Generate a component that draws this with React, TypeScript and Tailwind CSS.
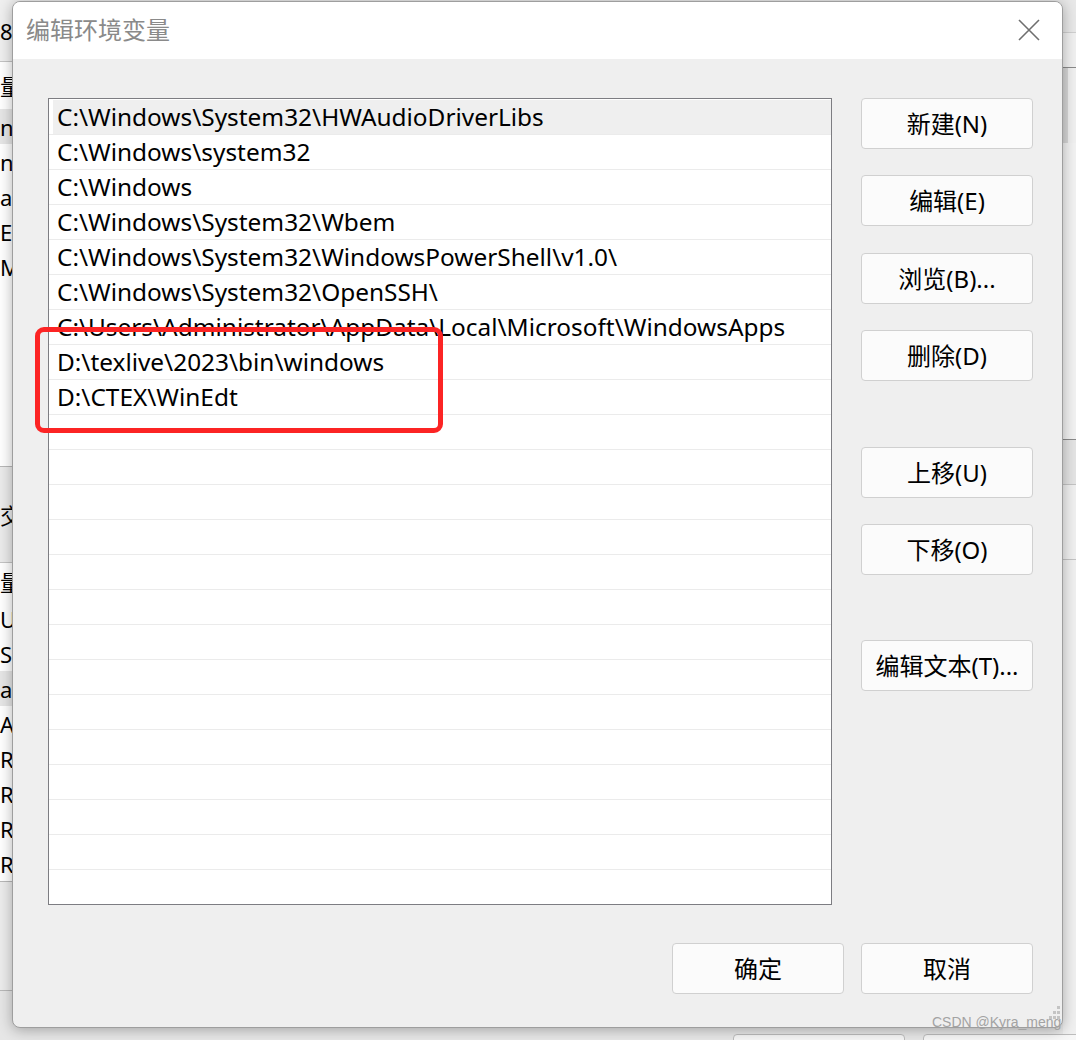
import React from 'react';

const paths = [
  'C:\\Windows\\System32\\HWAudioDriverLibs',
  'C:\\Windows\\system32',
  'C:\\Windows',
  'C:\\Windows\\System32\\Wbem',
  'C:\\Windows\\System32\\WindowsPowerShell\\v1.0\\',
  'C:\\Windows\\System32\\OpenSSH\\',
  'C:\\Users\\Administrator\\AppData\\Local\\Microsoft\\WindowsApps',
  'D:\\texlive\\2023\\bin\\windows',
  'D:\\CTEX\\WinEdt',
];

const rows = [...paths, ...Array(14).fill('')];

const FONT = "font-['Noto_Sans','Noto_Sans_CJK_SC',sans-serif]";

function Btn({ label, className = '' }: { label: string; className?: string }) {
  return (
    <div
      className={`w-[172px] h-[51px] flex items-center justify-center rounded-[4px] border border-[#d0d0d0] bg-[#fbfbfb] text-[24px] text-black ${className}`}
    >
      {label}
    </div>
  );
}

// bits of the window behind the dialog, left edge
function BackLeft() {
  const top = ['n', 'n', 'at', 'EN', 'M'];
  const bottom = ['U', 'S', 'at', 'A', 'R', 'R', 'R', 'R'];
  return (
    <div className="w-[40px] h-full flex flex-col bg-[#f3f3f3] text-[22px] text-black leading-none overflow-hidden">
      <div className="h-[62px] flex items-center border-b border-[#c4c4c4] bg-[#efefef]">8</div>
      <div className="h-[47px] flex items-center bg-white">量</div>
      {top.map((t, i) => (
        <div key={i} className={`h-[35px] flex items-center ${i === 0 ? 'bg-[#e6e6e6]' : 'bg-white'}`}>
          {t}
        </div>
      ))}
      <div className="h-[183px] bg-white border-b border-[#b8b8b8]"></div>
      <div className="h-[96px] flex items-center border-b border-[#c4c4c4] bg-[#ebebeb]">交</div>
      <div className="h-[38px] flex items-center bg-white">量</div>
      {bottom.map((t, i) => (
        <div key={i} className={`h-[35px] flex items-center ${i === 2 ? 'bg-[#e6e6e6]' : 'bg-white'}`}>
          {t}
        </div>
      ))}
      <div className="h-[110px] border-t border-[#b8b8b8] bg-[#ececec] border-b"></div>
      <div className="grow bg-[#e6e6e6]"></div>
    </div>
  );
}

function BackRight() {
  return (
    <div className="w-[13px] h-full flex flex-col bg-[#f0f0f0]">
      <div className="h-[33px] bg-[#e8e8e8] border-b border-[#cfcfcf]"></div>
      <div className="h-[35px] border-b border-[#8a8a8a]"></div>
      <div className="h-[75px] w-[5px] bg-[#d6d6d6]"></div>
      <div className="h-[297px] bg-[#f2f2f2] border-b border-[#8a8a8a]"></div>
      <div className="h-[45px] border-b border-[#c4c4c4] bg-[#e4e4e4]"></div>
      <div className="h-[75px] border-b border-[#c4c4c4]"></div>
      <div className="grow"></div>
    </div>
  );
}

export default function App() {
  return (
    <div className={`relative w-[1076px] h-[1040px] overflow-hidden bg-[#e8e8e8] ${FONT}`}>
      {/* window underneath */}
      <div className="flex h-full justify-between">
        <BackLeft />
        <BackRight />
      </div>
      <div className="absolute left-[733px] top-[1034px] flex gap-[18px]">
        <div className="w-[172px] h-[20px] rounded-[4px] border border-[#bdbdbd] bg-[#f7f7f7]"></div>
        <div className="w-[172px] h-[20px] rounded-[4px] border border-[#bdbdbd] bg-[#f7f7f7]"></div>
      </div>

      {/* dialog */}
      <div className="absolute left-[12px] top-[1px] w-[1051px] h-[1027px] flex flex-col rounded-[8px] border border-[#9e9e9e] bg-[#efefef] overflow-hidden shadow-[0_2px_14px_rgba(0,0,0,0.3)]">
        <div className="h-[57px] shrink-0 flex items-center justify-between bg-white pl-[13px] pr-[22px]">
          <div className="text-[24px] text-[#8a8a8a] -mt-[2px]">编辑环境变量</div>
          <svg width="22" height="22" viewBox="0 0 22 22" className="-mt-[2px]">
            <path d="M1 1 L21 21 M21 1 L1 21" stroke="#6f6f6f" strokeWidth="1.6" />
          </svg>
        </div>

        <div className="flex flex-col grow pl-[35px] pr-[29px] pt-[39px]">
          <div className="flex justify-between">
            <div className="w-[784px] h-[807px] border border-[#7d7d82] bg-white overflow-hidden pt-[1px]">
              {rows.map((p, i) => (
                <div key={i} className="h-[35px] border-b border-[#ebebeb] pl-[4px]">
                  <div
                    className={`h-full flex items-center pl-[4px] text-[24.4px] text-black whitespace-nowrap ${
                      i === 0 ? 'bg-[#efefef]' : ''
                    }`}
                  >
                    {p}
                  </div>
                </div>
              ))}
            </div>

            <div className="flex flex-col">
              <Btn label="新建(N)" />
              <Btn label="编辑(E)" className="mt-[26px]" />
              <Btn label="浏览(B)..." className="mt-[27px]" />
              <Btn label="删除(D)" className="mt-[26px]" />
              <Btn label="上移(U)" className="mt-[66px]" />
              <Btn label="下移(O)" className="mt-[26px]" />
              <Btn label="编辑文本(T)..." className="mt-[65px]" />
            </div>
          </div>

          <div className="flex justify-end gap-[17px] mt-[38px]">
            <Btn label="确定" />
            <Btn label="取消" />
          </div>
        </div>
      </div>

      {/* annotation */}
      <div className="absolute left-[35px] top-[327px] w-[408px] h-[106px] rounded-[9px] border-[5px] border-[#fc2424]"></div>

      {/* resize grip */}
      <svg className="absolute left-[1049px] top-[1006px]" width="12" height="14" viewBox="0 0 12 14">
        <rect x="8" y="0" width="3" height="3" fill="#c4c4c4" />
        <rect x="4" y="5" width="3" height="3" fill="#c4c4c4" />
        <rect x="8" y="5" width="3" height="3" fill="#c4c4c4" />
        <rect x="0" y="10" width="3" height="3" fill="#c4c4c4" />
        <rect x="4" y="10" width="3" height="3" fill="#c4c4c4" />
        <rect x="8" y="10" width="3" height="3" fill="#c4c4c4" />
      </svg>

      {/* watermark */}
      <div className="absolute left-[932px] top-[1012px] text-[14px] text-[#a3a3a3] font-['Liberation_Sans',sans-serif] whitespace-nowrap">
        CSDN @Kyra_meng
      </div>
    </div>
  );
}
